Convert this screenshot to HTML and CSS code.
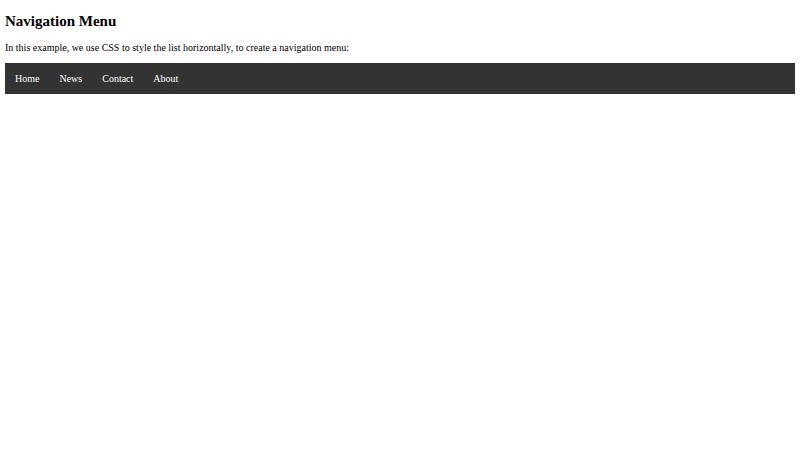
FILE: index.html
```html
<!DOCTYPE html>
<html>
<head>
<meta charset="utf-8">
<link rel="stylesheet" href="styles.css">
</head>
<body>
<h2 class="title">Navigation Menu</h2>
<p class="intro">In this example, we use CSS to style the list horizontally, to create a navigation menu:</p>
<ul class="nav">
  <li class="nav-item"><a class="nav-link" href="#home">Home</a></li>
  <li class="nav-item"><a class="nav-link" href="#news">News</a></li>
  <li class="nav-item"><a class="nav-link" href="#contact">Contact</a></li>
  <li class="nav-item"><a class="nav-link" href="#about">About</a></li>
</ul>
</body>
</html>
```
FILE: styles.css
```css
body {
  margin: 5px;
  font-family: "Liberation Serif", "Times New Roman", serif;
  font-size: 10px;
  color: #000;
  background: #fff;
}
.title {
  font-size: 15px;
  font-weight: bold;
  margin: 8px 0 11.5px;
}
.intro {
  margin: 11.5px 0 10px;
}
.nav {
  list-style: none;
  margin: 0;
  padding: 0;
  overflow: hidden;
  background-color: #333;
}
.nav-item {
  float: left;
}
.nav-link {
  display: block;
  color: #fff;
  text-align: center;
  padding: 10.25px 10px;
  text-decoration: none;
}
```
